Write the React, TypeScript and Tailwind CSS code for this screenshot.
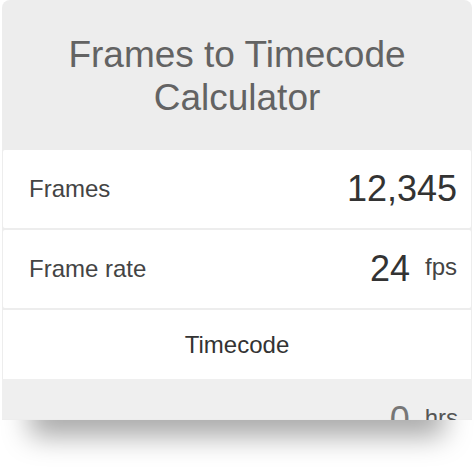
import React from 'react';

type Row = { label: string; value: string; unit?: string };

const inputs: Row[] = [
    { label: 'Frames', value: '12,345' },
    { label: 'Frame rate', value: '24', unit: 'fps' },
];

export default function App() {
    return (
        <div className="w-[474px] h-[474px] bg-white overflow-hidden" style={{ fontFamily: '"Liberation Sans", Arial, sans-serif' }}>
            {/* card, cut off at the bottom edge */}
            <div className="mx-[2px] h-[420px] overflow-hidden rounded-t-lg bg-[#ededed]">
                <div className="h-[150px] flex flex-col items-center justify-center pt-[2px] text-[37px] leading-[43px] text-[#636363]">
                    <span>Frames to Timecode</span>
                    <span>Calculator</span>
                </div>

                <div className="flex flex-col gap-[2px] px-[1px]">
                    {inputs.map(row => (
                        <div key={row.label} className="h-[78px] bg-white rounded-[2px] flex items-center justify-between pl-[26px] pr-[14px]">
                            <span className="text-[24px] text-[#444]">{row.label}</span>
                            <span className="flex items-baseline">
                                <span className="text-[36px] text-[#333]">{row.value}</span>
                                {row.unit && <span className="relative -top-[6px] ml-[15px] text-[24px] text-[#444]">{row.unit}</span>}
                            </span>
                        </div>
                    ))}

                    <div className="h-[69px] bg-white flex items-center justify-center text-[24px] text-[#333]">
                        Timecode
                    </div>
                </div>

                <div className="h-[40px] bg-[#efefef] flex justify-end items-start pt-[23px] pr-[14px]">
                    <span className="flex items-baseline">
                        <span className="text-[36px] leading-[36px] text-[#777]">0</span>
                        <span className="relative -top-[6px] ml-[15px] text-[24px] leading-[24px] text-[#555]">hrs</span>
                    </span>
                </div>
            </div>

            {/* soft shadow under the cut edge */}
            <div className="h-[54px] overflow-hidden">
                <div className="mx-[40px] h-[20px] -mt-[20px] shadow-[0_6px_28px_10px_rgba(0,0,0,0.35)]" />
            </div>
        </div>
    );
}
